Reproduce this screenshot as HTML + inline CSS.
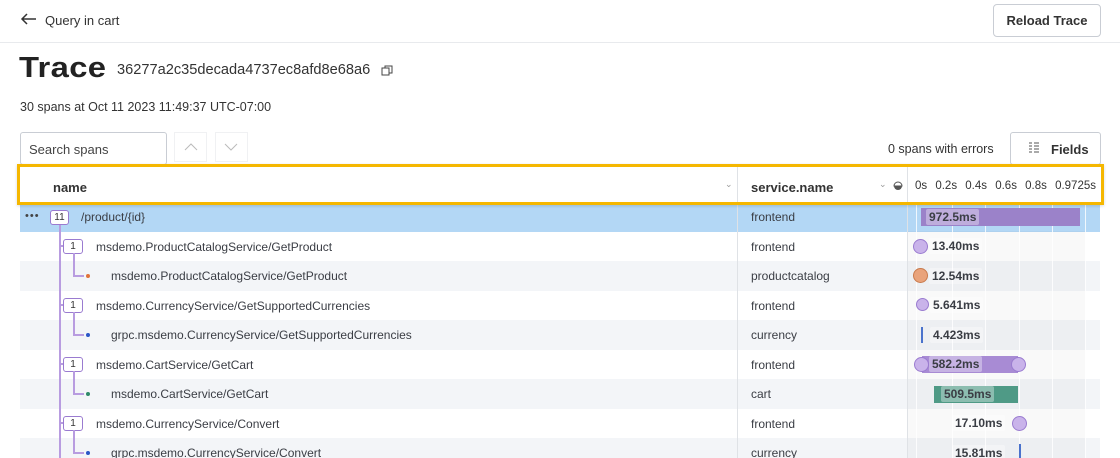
<!DOCTYPE html>
<html><head><meta charset="utf-8"><style>
*{box-sizing:border-box;margin:0;padding:0}
html,body{width:1120px;height:458px;overflow:hidden}
body{background:#fff;font-family:"Liberation Sans",sans-serif;color:#2b2d33;position:relative}
.a{position:absolute}
.t{font-size:12px;color:#3a3d44;white-space:nowrap}
.row{position:absolute;left:20px;width:1080px;height:29.5px}
.badge{position:absolute;width:20px;height:15px;border:1.5px solid #9a7bd0;border-radius:3px;background:#fff;font-size:10px;display:flex;align-items:center;justify-content:center;color:#333}
.lbl{position:absolute;font-size:12px;font-weight:bold;color:#3a3d44;background:rgba(255,255,255,.35);padding:0 3px;line-height:16px;border-radius:2px}
.circ{position:absolute;border-radius:50%;background:#c9b3ea;border:1.5px solid #9a7bd0}
</style></head><body>
<svg class="a" style="left:20px;top:12px" width="18" height="14"><path d="M16 7H2M7 2L2 7l5 5" stroke="#333" stroke-width="1.5" fill="none"/></svg>
<div class="a t" style="left:45px;top:13px;font-size:13px;color:#333">Query in cart</div>
<div class="a" style="left:993px;top:4px;width:108px;height:33px;border:1px solid #c9cdd4;border-radius:4px;font-size:13px;font-weight:bold;text-align:center;line-height:31px;color:#333">Reload Trace</div>
<div class="a" style="left:0;top:42px;width:1120px;height:1px;background:#e8eaed"></div>
<div class="a" style="left:19px;top:52px;font-size:29px;font-weight:900;color:#222;letter-spacing:0.3px;transform:scaleX(1.13);transform-origin:left">Trace</div>
<div class="a" style="left:117px;top:62px;font-size:14.6px;color:#333">36277a2c35decada4737ec8afd8e68a6</div>
<svg class="a" style="left:381px;top:65px" width="12" height="12"><rect x="1" y="3" width="7" height="7" fill="none" stroke="#444"/><path d="M4 3V1h7v7H8" fill="none" stroke="#444"/></svg>
<div class="a t" style="left:20px;top:100px;font-size:12.5px;color:#333">30 spans at Oct 11 2023 11:49:37 UTC-07:00</div>
<div class="a" style="left:20px;top:132px;width:147px;height:33px;border:1px solid #c9cdd4;border-radius:3px;font-size:13px;color:#444;padding:9px 0 0 8px">Search spans</div>
<div class="a" style="left:174px;top:132px;width:33px;height:30px;border:1px solid #f0f1f3"></div>
<div class="a" style="left:215px;top:132px;width:33px;height:30px;border:1px solid #f0f1f3"></div>
<svg class="a" style="left:183px;top:142px" width="16" height="10"><path d="M2 8l6-6 6 6" stroke="#bbb" fill="none"/></svg>
<svg class="a" style="left:223px;top:142px" width="16" height="10"><path d="M2 2l6 6 6-6" stroke="#bbb" fill="none"/></svg>
<div class="a t" style="left:888px;top:142px;font-size:12.5px;color:#333">0 spans with errors</div>
<div class="a" style="left:1010px;top:132px;width:91px;height:33px;border:1px solid #c9cdd4;border-radius:3px;font-size:13px;font-weight:bold;color:#333;padding:9px 0 0 40px">Fields</div>
<svg class="a" style="left:1028px;top:142px" width="12" height="12"><path d="M1 1h3M1 4h3M1 7h3M1 10h3M6 1h5M6 4h5M6 7h5M6 10h5" stroke="#555"/></svg>

<div class="row" style="top:202px;background:#b3d7f5"></div>
<div class="row" style="top:231.5px;background:#fff"></div>
<div class="row" style="top:261px;background:#f3f5f8"></div>
<div class="row" style="top:290.5px;background:#fff"></div>
<div class="row" style="top:320px;background:#f3f5f8"></div>
<div class="row" style="top:349.5px;background:#fff"></div>
<div class="row" style="top:379px;background:#f3f5f8"></div>
<div class="row" style="top:408.5px;background:#fff"></div>
<div class="row" style="top:438px;background:#f3f5f8"></div>
<div class="a" style="left:908px;top:231px;width:177px;height:227px;background:rgba(0,0,0,.025)"></div>
<div class="a" style="left:737px;top:166px;width:1px;height:292px;background:#dfe2e6"></div>
<div class="a" style="left:907px;top:166px;width:1px;height:292px;background:#dfe2e6"></div>
<div class="a" style="left:916px;top:202px;width:1px;height:256px;background:rgba(255,255,255,.8)"></div>
<div class="a" style="left:952px;top:202px;width:1px;height:256px;background:rgba(255,255,255,.8)"></div>
<div class="a" style="left:985px;top:202px;width:1px;height:256px;background:rgba(255,255,255,.8)"></div>
<div class="a" style="left:1019px;top:202px;width:1px;height:256px;background:rgba(255,255,255,.8)"></div>
<div class="a" style="left:1052px;top:202px;width:1px;height:256px;background:rgba(255,255,255,.8)"></div>
<div class="a" style="left:1085px;top:202px;width:1px;height:256px;background:rgba(255,255,255,.8)"></div>

<div class="a" style="left:17px;top:164px;width:1087px;height:41px;border:3px solid #f5b700;background:#fff;box-shadow:0 1px 3px rgba(0,0,0,.15)"></div>
<div class="a" style="left:737px;top:167px;width:1px;height:35px;background:#dfe2e6"></div>
<div class="a" style="left:907px;top:167px;width:1px;height:35px;background:#dfe2e6"></div>
<div class="a" style="left:53px;top:180px;font-size:13px;font-weight:bold;color:#333">name</div>
<div class="a" style="left:725px;top:179px;font-size:9px;color:#999">&#8964;</div>
<div class="a" style="left:751px;top:180px;font-size:13px;font-weight:bold;color:#333">service.name</div>
<div class="a" style="left:879px;top:179px;font-size:9px;color:#999">&#8964;</div>
<svg class="a" style="left:893px;top:181px" width="10" height="10"><path d="M5 1a4 4 0 0 1 4 4v0H1a4 4 0 0 1 4-4z" fill="none" stroke="#555"/><path d="M1 5h8a4 4 0 0 1-8 0z" fill="#555"/></svg>
<div class="a" style="left:915px;top:180px;font-size:11.5px;color:#333;word-spacing:5px;white-space:nowrap">0s 0.2s 0.4s 0.6s 0.8s 0.9725s</div>

<div class="a" style="left:25px;top:210px;font-size:11px;color:#444;letter-spacing:1px">&#8226;&#8226;&#8226;</div>
<div class="a" style="left:59px;top:223px;width:1.5px;height:235px;background:#b89ce0"></div>
<div class="badge" style="left:50px;top:210px;width:19px">11</div>
<div class="a t" style="left:81px;top:210px">/product/{id}</div>

<div class="a" style="left:59px;top:245px;width:5px;height:1.5px;background:#b89ce0"></div>
<div class="badge" style="left:63px;top:239px">1</div>
<div class="a" style="left:73px;top:253px;width:1.5px;height:23px;background:#b89ce0"></div>
<div class="a" style="left:73px;top:275px;width:11px;height:1.5px;background:#b89ce0"></div>
<div class="a" style="left:86px;top:274px;width:4px;height:4px;border-radius:50%;background:#e0733a"></div>
<div class="a t" style="left:96px;top:240px">msdemo.ProductCatalogService/GetProduct</div>
<div class="a t" style="left:111px;top:269px">msdemo.ProductCatalogService/GetProduct</div>

<div class="a" style="left:59px;top:304px;width:5px;height:1.5px;background:#b89ce0"></div>
<div class="badge" style="left:63px;top:298px">1</div>
<div class="a" style="left:73px;top:312px;width:1.5px;height:23px;background:#b89ce0"></div>
<div class="a" style="left:73px;top:334px;width:11px;height:1.5px;background:#b89ce0"></div>
<div class="a" style="left:86px;top:333px;width:4px;height:4px;border-radius:50%;background:#2b57c7"></div>
<div class="a t" style="left:96px;top:299px">msdemo.CurrencyService/GetSupportedCurrencies</div>
<div class="a t" style="left:111px;top:328px">grpc.msdemo.CurrencyService/GetSupportedCurrencies</div>

<div class="a" style="left:59px;top:363px;width:5px;height:1.5px;background:#b89ce0"></div>
<div class="badge" style="left:63px;top:357px">1</div>
<div class="a" style="left:73px;top:371px;width:1.5px;height:23px;background:#b89ce0"></div>
<div class="a" style="left:73px;top:393px;width:11px;height:1.5px;background:#b89ce0"></div>
<div class="a" style="left:86px;top:392px;width:4px;height:4px;border-radius:50%;background:#2f8a6a"></div>
<div class="a t" style="left:96px;top:358px">msdemo.CartService/GetCart</div>
<div class="a t" style="left:111px;top:387px">msdemo.CartService/GetCart</div>

<div class="a" style="left:59px;top:422px;width:5px;height:1.5px;background:#b89ce0"></div>
<div class="badge" style="left:63px;top:416px">1</div>
<div class="a" style="left:73px;top:430px;width:1.5px;height:23px;background:#b89ce0"></div>
<div class="a" style="left:73px;top:452px;width:11px;height:1.5px;background:#b89ce0"></div>
<div class="a" style="left:86px;top:451px;width:4px;height:4px;border-radius:50%;background:#2b57c7"></div>
<div class="a t" style="left:96px;top:417px">msdemo.CurrencyService/Convert</div>
<div class="a t" style="left:111px;top:446px">grpc.msdemo.CurrencyService/Convert</div>

<div class="a t" style="left:751px;top:210px">frontend</div>
<div class="a t" style="left:751px;top:240px">frontend</div>
<div class="a t" style="left:751px;top:269px">productcatalog</div>
<div class="a t" style="left:751px;top:299px">frontend</div>
<div class="a t" style="left:751px;top:328px">currency</div>
<div class="a t" style="left:751px;top:358px">frontend</div>
<div class="a t" style="left:751px;top:387px">cart</div>
<div class="a t" style="left:751px;top:417px">frontend</div>
<div class="a t" style="left:751px;top:446px">currency</div>

<div class="a" style="left:921px;top:208px;width:159px;height:18px;background:#9b82c9"></div>
<div class="lbl" style="left:926px;top:209px">972.5ms</div>
<div class="circ" style="left:913px;top:239px;width:15px;height:15px"></div>
<div class="lbl" style="left:929px;top:238px">13.40ms</div>
<div class="circ" style="left:913px;top:268px;width:15px;height:15px;background:#e9a37b;border-color:#c97a4c"></div>
<div class="lbl" style="left:929px;top:268px">12.54ms</div>
<div class="circ" style="left:916px;top:298px;width:13px;height:13px"></div>
<div class="lbl" style="left:930px;top:297px">5.641ms</div>
<div class="a" style="left:921px;top:327px;width:2px;height:16px;background:#4a72cc"></div>
<div class="lbl" style="left:930px;top:327px">4.423ms</div>
<div class="a" style="left:922px;top:356px;width:96px;height:17px;background:#a88bd4"></div>
<div class="circ" style="left:914px;top:357px;width:15px;height:15px"></div>
<div class="circ" style="left:1011px;top:357px;width:15px;height:15px"></div>
<div class="lbl" style="left:929px;top:356px">582.2ms</div>
<div class="a" style="left:934px;top:386px;width:84px;height:17px;background:#4f9a86"></div>
<div class="lbl" style="left:941px;top:386px">509.5ms</div>
<div class="lbl" style="left:952px;top:415px">17.10ms</div>
<div class="circ" style="left:1012px;top:416px;width:15px;height:15px"></div>
<div class="lbl" style="left:952px;top:445px">15.81ms</div>
<div class="a" style="left:1019px;top:444px;width:2px;height:14px;background:#4a72cc"></div>
</body></html>
